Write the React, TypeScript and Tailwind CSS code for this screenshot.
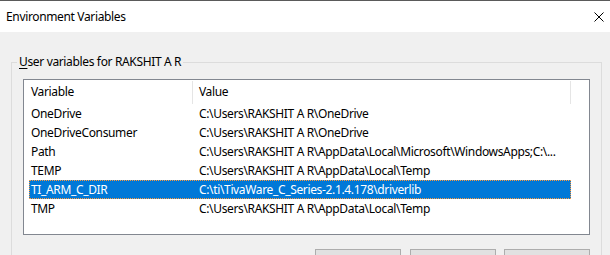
import React from 'react';

const rows = [
  { name: 'OneDrive', value: 'C:\\Users\\RAKSHIT A R\\OneDrive' },
  { name: 'OneDriveConsumer', value: 'C:\\Users\\RAKSHIT A R\\OneDrive' },
  { name: 'Path', value: 'C:\\Users\\RAKSHIT A R\\AppData\\Local\\Microsoft\\WindowsApps;C:\\...' },
  { name: 'TEMP', value: 'C:\\Users\\RAKSHIT A R\\AppData\\Local\\Temp' },
  { name: 'TI_ARM_C_DIR', value: 'C:\\ti\\TivaWare_C_Series-2.1.4.178\\driverlib', selected: true },
  { name: 'TMP', value: 'C:\\Users\\RAKSHIT A R\\AppData\\Local\\Temp' },
];

const App: React.FC = () => {
  return (
    <div
      className="w-[610px] h-[255px] overflow-hidden bg-[#f0f0f0] text-[12px] tracking-[-0.35px] text-black"
      style={{ fontFamily: '"Noto Sans", "Open Sans", sans-serif' }}
    >
      {/* title bar */}
      <div className="h-[32px] bg-white border-t border-[#5a5a5a] flex items-center justify-between pl-[6px] pr-[6px]">
        <span className="leading-none">Environment Variables</span>
        <svg width="10" height="10" viewBox="0 0 10 10" className="mr-[0px]">
          <path d="M0.5 0.5 L9.5 9.5 M9.5 0.5 L0.5 9.5" stroke="#000" strokeWidth="1" />
        </svg>
      </div>

      {/* group box */}
      <div className="relative mt-[30px] ml-[11px] w-[591px] h-[260px] border border-[#dcdcdc]">
        <span className="absolute -top-[10px] left-[5px] px-[2px] bg-[#f0f0f0] leading-[18px]">
          <span className="underline underline-offset-2">U</span>ser variables for RAKSHIT A R
        </span>

        <div className="mt-[16px] ml-[11px] w-[567px] h-[156px] border border-[#828790] bg-white">
          <div className="h-[24px] flex">
            <div className="w-[168px] pl-[7px] flex items-center">Variable</div>
            <div className="w-px mt-[1px] bg-[#e5e5e5]" />
            <div className="w-[377px] pl-[6px] flex items-center">Value</div>
            <div className="w-px mt-[1px] bg-[#e5e5e5]" />
          </div>
          {rows.map((r) => (
            <div
              key={r.name}
              className={
                'ml-[5px] w-[542px] h-[19px] flex items-center whitespace-nowrap ' +
                (r.selected ? 'bg-[#0078d7] text-white outline outline-1 outline-dotted outline-[#ff9a3c] -outline-offset-1' : '')
              }
            >
              <div className="w-[164px] pl-[2px] overflow-hidden">{r.name}</div>
              <div className="flex-1 pl-[6px] overflow-hidden">{r.value}</div>
            </div>
          ))}
        </div>

        <div className="mt-[14px] mr-[11px] flex justify-end">
          <div className="w-[86px] h-[23px] bg-[#e1e1e1] border border-[#adadad]" />
          <div className="ml-[9px] w-[86px] h-[23px] bg-[#e1e1e1] border border-[#adadad]" />
          <div className="ml-[8px] w-[86px] h-[23px] bg-[#e1e1e1] border border-[#adadad]" />
        </div>
      </div>
    </div>
  );
};

export default App;
